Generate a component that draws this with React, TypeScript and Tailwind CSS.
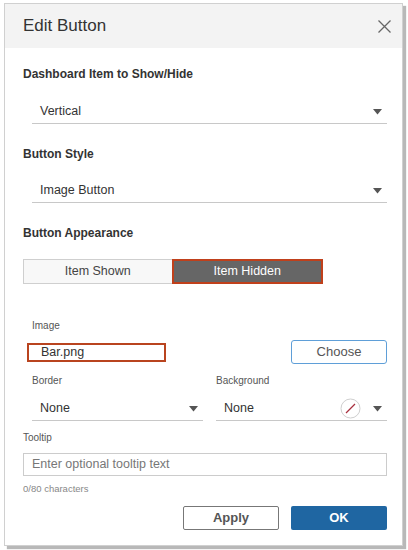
import React from "react";

const font = { fontFamily: '"Liberation Sans", Arial, sans-serif' };

function Caret() {
  return (
    <svg width="9" height="6" viewBox="0 0 9 6" className="shrink-0">
      <path d="M0 0 L9 0 L4.5 5.5 Z" fill="#555" />
    </svg>
  );
}

function Dropdown({ value, className = "", extra }: { value: string; className?: string; extra?: React.ReactNode }) {
  return (
    <div className={`flex h-[26px] items-center border-b border-[#c8c8c8] pl-[8px] pr-[5px] pt-[2px] ${className}`}>
      <span className="flex-1 text-[12.5px] text-[#333]">{value}</span>
      {extra}
      <Caret />
    </div>
  );
}

export default function App() {
  return (
    <div className="min-h-[550px] w-[408px] bg-white pl-[4px] pt-[3px]" style={font}>
      <div className="flex h-[543px] w-[399px] flex-col border border-[#d0d0d0] bg-white shadow-[3px_3px_1px_rgba(0,0,0,0.28)]">
        {/* header */}
        <div className="flex h-[44px] shrink-0 items-center justify-between bg-[#f3f3f3] pl-[18px] pr-[11px]">
          <span className="text-[17px] text-[#333]">Edit Button</span>
          <svg width="13" height="13" viewBox="0 0 13 13">
            <path d="M0.5 0.5 L12.5 12.5 M12.5 0.5 L0.5 12.5" stroke="#666" strokeWidth="1.3" />
          </svg>
        </div>

        {/* body */}
        <div className="flex flex-col pl-[18px] pr-[15px]">
          <div className="mt-[18px] text-[12px] font-bold leading-[16px] text-[#333]">Dashboard Item to Show/Hide</div>
          <Dropdown value="Vertical" className="ml-[9px] mt-[16px]" />

          <div className="mt-[22px] text-[12px] font-bold leading-[16px] text-[#333]">Button Style</div>
          <Dropdown value="Image Button" className="ml-[9px] mt-[15px]" />

          <div className="mt-[22px] text-[12px] font-bold leading-[16px] text-[#333]">Button Appearance</div>
          <div className="mt-[18px] flex h-[25px] w-[300px]">
            <div className="flex flex-1 items-center justify-center border border-r-0 border-[#cfcfcf] bg-[#f8f8f8] text-[12.5px] text-[#444]">
              Item Shown
            </div>
            <div className="flex flex-1 items-center justify-center border-2 border-[#c0401b] bg-[#666666] text-[12.5px] text-white">
              Item Hidden
            </div>
          </div>

          <div className="ml-[9px] mt-[35px] text-[10px] leading-[14px] text-[#555]">Image</div>
          <div className="mt-[7px] flex h-[24px] items-center justify-between">
            <div className="ml-[4px] flex h-[19px] w-[139px] items-center border-2 border-[#b9441f] pl-[12px] text-[12.5px] text-[#333]">
              Bar.png
            </div>
            <div className="flex h-[24px] w-[96px] items-center justify-center rounded-[3px] border-[1.5px] border-[#5f9fd8] text-[13px] text-[#555]">
              Choose
            </div>
          </div>

          <div className="mt-[10px] flex">
            <div className="ml-[9px] w-[184px] text-[10px] leading-[14px] text-[#555]">Border</div>
            <div className="text-[10px] leading-[14px] text-[#555]">Background</div>
          </div>
          <div className="mt-[7px] flex">
            <Dropdown value="None" className="ml-[9px] w-[171px]" />
            <div className="w-[13px]" />
            <Dropdown
              value="None"
              className="flex-1 pl-[7px]"
              extra={
                <svg width="21" height="21" viewBox="0 0 21 21" className="mr-[12px]">
                  <circle cx="10.5" cy="10.5" r="9.5" fill="white" stroke="#cfcfcf" strokeWidth="1" />
                  <path d="M6 15 L15 6" stroke="#a8303f" strokeWidth="1.2" />
                </svg>
              }
            />
          </div>

          <div className="mt-[10px] text-[10px] leading-[14px] text-[#555]">Tooltip</div>
          <div className="mt-[8px] flex h-[23px] items-center border border-[#cccccc] pl-[8px] text-[12.5px] text-[#777]">
            Enter optional tooltip text
          </div>
          <div className="mt-[6px] text-[9.5px] leading-[14px] text-[#888]">0/80 characters</div>

          <div className="mt-[10px] flex justify-end gap-[12px]">
            <div className="flex h-[24px] w-[96px] items-center justify-center rounded-[2px] border border-[#777] text-[13px] font-bold text-[#555]">
              Apply
            </div>
            <div className="flex h-[24px] w-[96px] items-center justify-center rounded-[2px] bg-[#1f66a2] text-[13px] font-bold text-white">
              OK
            </div>
          </div>
        </div>
      </div>
    </div>
  );
}
